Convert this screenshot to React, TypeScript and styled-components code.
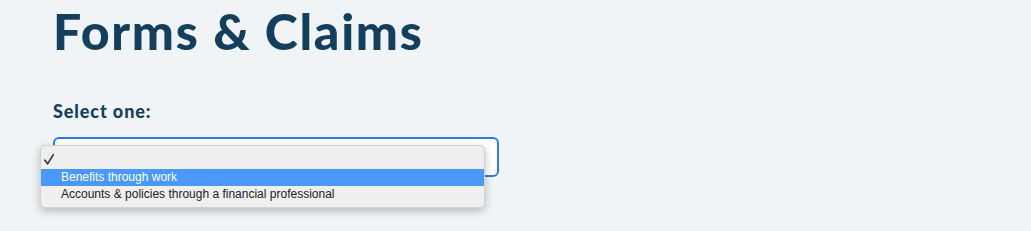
import styled, { createGlobalStyle } from "styled-components";

const GlobalStyle = createGlobalStyle`
  html, body {
    margin: 0;
    padding: 0;
    background: #f1f4f6;
  }
  body {
    font-family: "Lato", "Liberation Sans", sans-serif;
  }
`;

const options = [
  { label: "", checked: true },
  { label: "Benefits through work", active: true },
  { label: "Accounts & policies through a financial professional" },
];

const CheckIcon = () => (
  <svg width="10" height="11" viewBox="0 0 10 11">
    <path d="M0.8 6.2 L3.6 9.8 L9.2 0.8" fill="none" stroke="#333" strokeWidth="1.6" strokeLinecap="round" strokeLinejoin="round" />
  </svg>
);

const App = () => {
  return (
    <>
      <GlobalStyle />
      <Page>
        <Heading>Forms &amp; Claims</Heading>
        <Label>Select one:</Label>
        <SelectWrap>
          <SelectBox />
          <Menu>
            {options.map((opt, i) => (
              <Option key={i} $active={opt.active}>
                <Check>{opt.checked ? <CheckIcon /> : null}</Check>
                {opt.label}
              </Option>
            ))}
          </Menu>
        </SelectWrap>
      </Page>
    </>
  );
};

export default App;

const Page = styled.div`
  width: 1031px;
  height: 231px;
  padding: 0 0 0 53px;
  box-sizing: border-box;
  overflow: hidden;
`;

const Heading = styled.h1`
  margin: 0;
  padding-top: 1px;
  font-family: "Lato", sans-serif;
  font-weight: 900;
  font-size: 50px;
  line-height: 60px;
  color: #133f5c;
  letter-spacing: 1.7px;
`;

const Label = styled.div`
  margin-top: 39px;
  font-family: "Lato", sans-serif;
  font-weight: 900;
  font-size: 18px;
  line-height: 22px;
  color: #133f5c;
  letter-spacing: 0.9px;
`;

const SelectWrap = styled.div`
  position: relative;
  margin-top: 15px;
  width: 446px;
`;

const SelectBox = styled.div`
  height: 40px;
  box-sizing: border-box;
  border: 2px solid #2f7be6;
  border-radius: 6px;
  background: #ffffff;
`;

const Menu = styled.div`
  position: absolute;
  top: 8px;
  left: -13px;
  width: 445px;
  box-sizing: border-box;
  padding: 3px 0 4px;
  background: #efefef;
  border: 1px solid #d2d2d2;
  border-radius: 5px;
  box-shadow: 0 3px 8px rgba(0, 0, 0, 0.25);
  font-family: "Liberation Sans", Arial, sans-serif;
  font-size: 12px;
`;

const Option = styled.div<{ $active?: boolean }>`
  display: flex;
  align-items: center;
  height: 17px;
  line-height: 17px;
  color: ${(p) => (p.$active ? "#ffffff" : "#222222")};
  background: ${(p) => (p.$active ? "#4a99f8" : "transparent")};
  &:first-child {
    height: 20px;
  }
`;

const Check = styled.span`
  display: inline-flex;
  align-items: center;
  width: 20px;
  padding-left: 3px;
  box-sizing: border-box;
`;
